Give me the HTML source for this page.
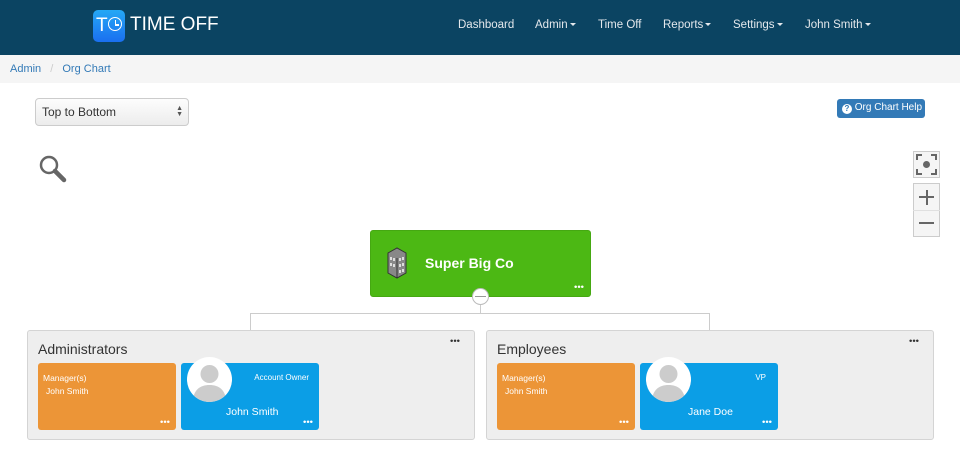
<!DOCTYPE html>
<html><head><meta charset="utf-8"><style>
*{box-sizing:border-box;margin:0;padding:0}
body{width:960px;height:457px;background:#fff;font-family:"Liberation Sans",sans-serif;position:relative;overflow:hidden}
.a{position:absolute}
.nav{left:0;top:0;width:960px;height:55px;background:#0b4462}
.ni{top:19px;color:#e4e8ec;font-size:11.5px}
.car{display:inline-block;border-left:3.5px solid transparent;border-right:3.5px solid transparent;border-top:3.5px solid #e4e8ec;vertical-align:middle;margin-left:2px}
.bc{left:0;top:55px;width:960px;height:28px;background:#f5f5f5;font-size:11px;color:#337ab7;padding:8px 10px}
.grp{background:#eee;border:1px solid #d4d4d4;border-radius:3px;height:110px}
.gt{font-size:14px;color:#333;left:10px;top:10px}
.card{border-radius:3px;height:67px;color:#fff;font-size:8.5px}
.dots{right:6px;bottom:3px;font-size:9.5px;letter-spacing:0px;color:#fff;line-height:8px}
.av{width:45px;height:45px;border-radius:50%;background:#fff;overflow:hidden}
.ln{background:#ccc}
</style></head><body>
<div class="a nav"></div>
<div class="a" style="left:93px;top:10px;width:32px;height:32px;border-radius:5px;background:linear-gradient(#25a8f5,#1a6ff0)"></div>
<div class="a" style="left:96px;top:13px;color:#fff;font-size:19px;line-height:26px">T</div>
<div class="a" style="left:108px;top:17px;width:14px;height:14px;border:1.5px solid #fff;border-radius:50%"></div>
<div class="a" style="left:114.5px;top:20px;width:1.5px;height:5px;background:#fff"></div>
<div class="a" style="left:114.5px;top:24px;width:4px;height:1.5px;background:#fff"></div>
<div class="a" style="left:130px;top:14px;color:#fff;font-size:19px;letter-spacing:0px">TIME OFF</div>
<div class="a ni" style="left:458px">Dashboard</div>
<div class="a ni" style="left:535px">Admin<span class="car"></span></div>
<div class="a ni" style="left:598px">Time Off</div>
<div class="a ni" style="left:663px">Reports<span class="car"></span></div>
<div class="a ni" style="left:733px">Settings<span class="car"></span></div>
<div class="a ni" style="left:805px">John Smith<span class="car"></span></div>
<div class="a bc">Admin <span style="color:#ccc;margin:0 6px">/</span> Org Chart</div>
<div class="a" style="left:35px;top:98px;width:154px;height:28px;border:1px solid #ccc;border-radius:4px;background:linear-gradient(#fdfdfd,#ececec);font-size:12px;color:#333;padding:6px 6px">Top to Bottom<span class="a" style="right:5px;top:7px;font-size:7px;line-height:6px;color:#555">▲<br>▼</span></div>
<div class="a" style="left:837px;top:99px;width:88px;height:19px;background:#337ab7;border-radius:3px;color:#fff;font-size:10px;padding:3px 5px;white-space:nowrap;overflow:hidden"><span style="display:inline-block;width:10px;height:10px;border-radius:50%;background:#fff;color:#337ab7;font-size:8px;text-align:center;line-height:10px;font-weight:bold;vertical-align:-1px">?</span> Org Chart Help</div>
<svg class="a" style="left:38px;top:154px" width="30" height="30"><circle cx="11" cy="11" r="8" fill="none" stroke="#666" stroke-width="2.5"/><line x1="17" y1="17" x2="26" y2="26" stroke="#666" stroke-width="4.5" stroke-linecap="round"/></svg>
<div class="a" style="left:913px;top:151px;width:27px;height:27px;border:1px solid #ccc;background:#f5f5f5"></div>
<svg class="a" style="left:913px;top:151px" width="27" height="27" fill="none" stroke="#666" stroke-width="2"><path d="M4 9V4h5M18 4h5v5M23 18v5h-5M9 23H4v-5"/><circle cx="13.5" cy="13.5" r="3.5" fill="#666" stroke="none"/></svg>
<div class="a" style="left:913px;top:183px;width:27px;height:54px;border:1px solid #ccc;background:#f5f5f5"></div>
<div class="a" style="left:913px;top:210px;width:27px;height:1px;background:#e0e0e0"></div>
<div class="a" style="left:919px;top:196px;width:15px;height:2px;background:#666"></div>
<div class="a" style="left:925.5px;top:189.5px;width:2px;height:15px;background:#666"></div>
<div class="a" style="left:919px;top:222px;width:15px;height:2px;background:#666"></div>
<div class="a ln" style="left:250px;top:313px;width:460px;height:1px"></div>
<div class="a ln" style="left:480px;top:296px;width:1px;height:17px"></div>
<div class="a ln" style="left:250px;top:313px;width:1px;height:17px"></div>
<div class="a ln" style="left:709px;top:313px;width:1px;height:17px"></div>
<div class="a card" style="left:370px;top:230px;width:221px;height:67px;background:#4cb814;border:1px solid #45a812"></div>
<svg class="a" style="left:386px;top:247px" width="22" height="32"><path d="M2 6l9-5 9 5v20l-9 5-9-5z" fill="#888" stroke="#333"/><path d="M11 11v20" stroke="#333"/><g fill="#ddd"><rect x="4" y="10" width="2" height="3"/><rect x="7" y="11" width="2" height="3"/><rect x="4" y="16" width="2" height="3"/><rect x="7" y="17" width="2" height="3"/><rect x="13" y="11" width="2" height="3"/><rect x="16" y="10" width="2" height="3"/><rect x="13" y="17" width="2" height="3"/><rect x="16" y="16" width="2" height="3"/><rect x="13" y="23" width="2" height="3"/><rect x="16" y="22" width="2" height="3"/></g></svg>
<div class="a" style="left:425px;top:255px;color:#fff;font-size:14px;font-weight:bold">Super Big Co</div>
<div class="a dots" style="left:574px;top:284px">•••</div>
<div class="a" style="left:472px;top:288px;width:17px;height:17px;border-radius:50%;background:#fff;border:1px solid #bbb"></div>
<div class="a" style="left:475px;top:296px;width:11px;height:1px;background:#999"></div>

<div class="a grp" style="left:27px;top:330px;width:448px"><div class="a gt">Administrators</div><div class="a dots" style="right:14px;top:7px;color:#333">•••</div></div>
<div class="a grp" style="left:486px;top:330px;width:448px"><div class="a gt">Employees</div><div class="a dots" style="right:14px;top:7px;color:#333">•••</div></div>

<div class="a card" style="left:38px;top:363px;width:138px;background:#ec9537"><div class="a" style="left:5px;top:10px">Manager(s)</div><div class="a" style="left:8px;top:23px">John Smith</div><div class="a dots">•••</div></div>
<div class="a card" style="left:181px;top:363px;width:138px;background:#0b9ee6"><div class="a" style="right:10px;top:10px;font-size:8px">Account Owner</div><div class="a" style="left:45px;top:43px;font-size:10.5px">John Smith</div><div class="a dots">•••</div></div>
<div class="a card" style="left:497px;top:363px;width:138px;background:#ec9537"><div class="a" style="left:5px;top:10px">Manager(s)</div><div class="a" style="left:8px;top:23px">John Smith</div><div class="a dots">•••</div></div>
<div class="a card" style="left:640px;top:363px;width:138px;background:#0b9ee6"><div class="a" style="right:12px;top:10px;font-size:8px">VP</div><div class="a" style="left:48px;top:43px;font-size:10.5px">Jane Doe</div><div class="a dots">•••</div></div>

<div class="a av" style="left:187px;top:357px"><svg width="45" height="45"><circle cx="22.5" cy="17" r="9" fill="#ccc"/><path d="M6 45c0-12 7-17 16.5-17S39 33 39 45z" fill="#ccc"/></svg></div>
<div class="a av" style="left:646px;top:357px"><svg width="45" height="45"><circle cx="22.5" cy="17" r="9" fill="#ccc"/><path d="M6 45c0-12 7-17 16.5-17S39 33 39 45z" fill="#ccc"/></svg></div>
</body></html>
